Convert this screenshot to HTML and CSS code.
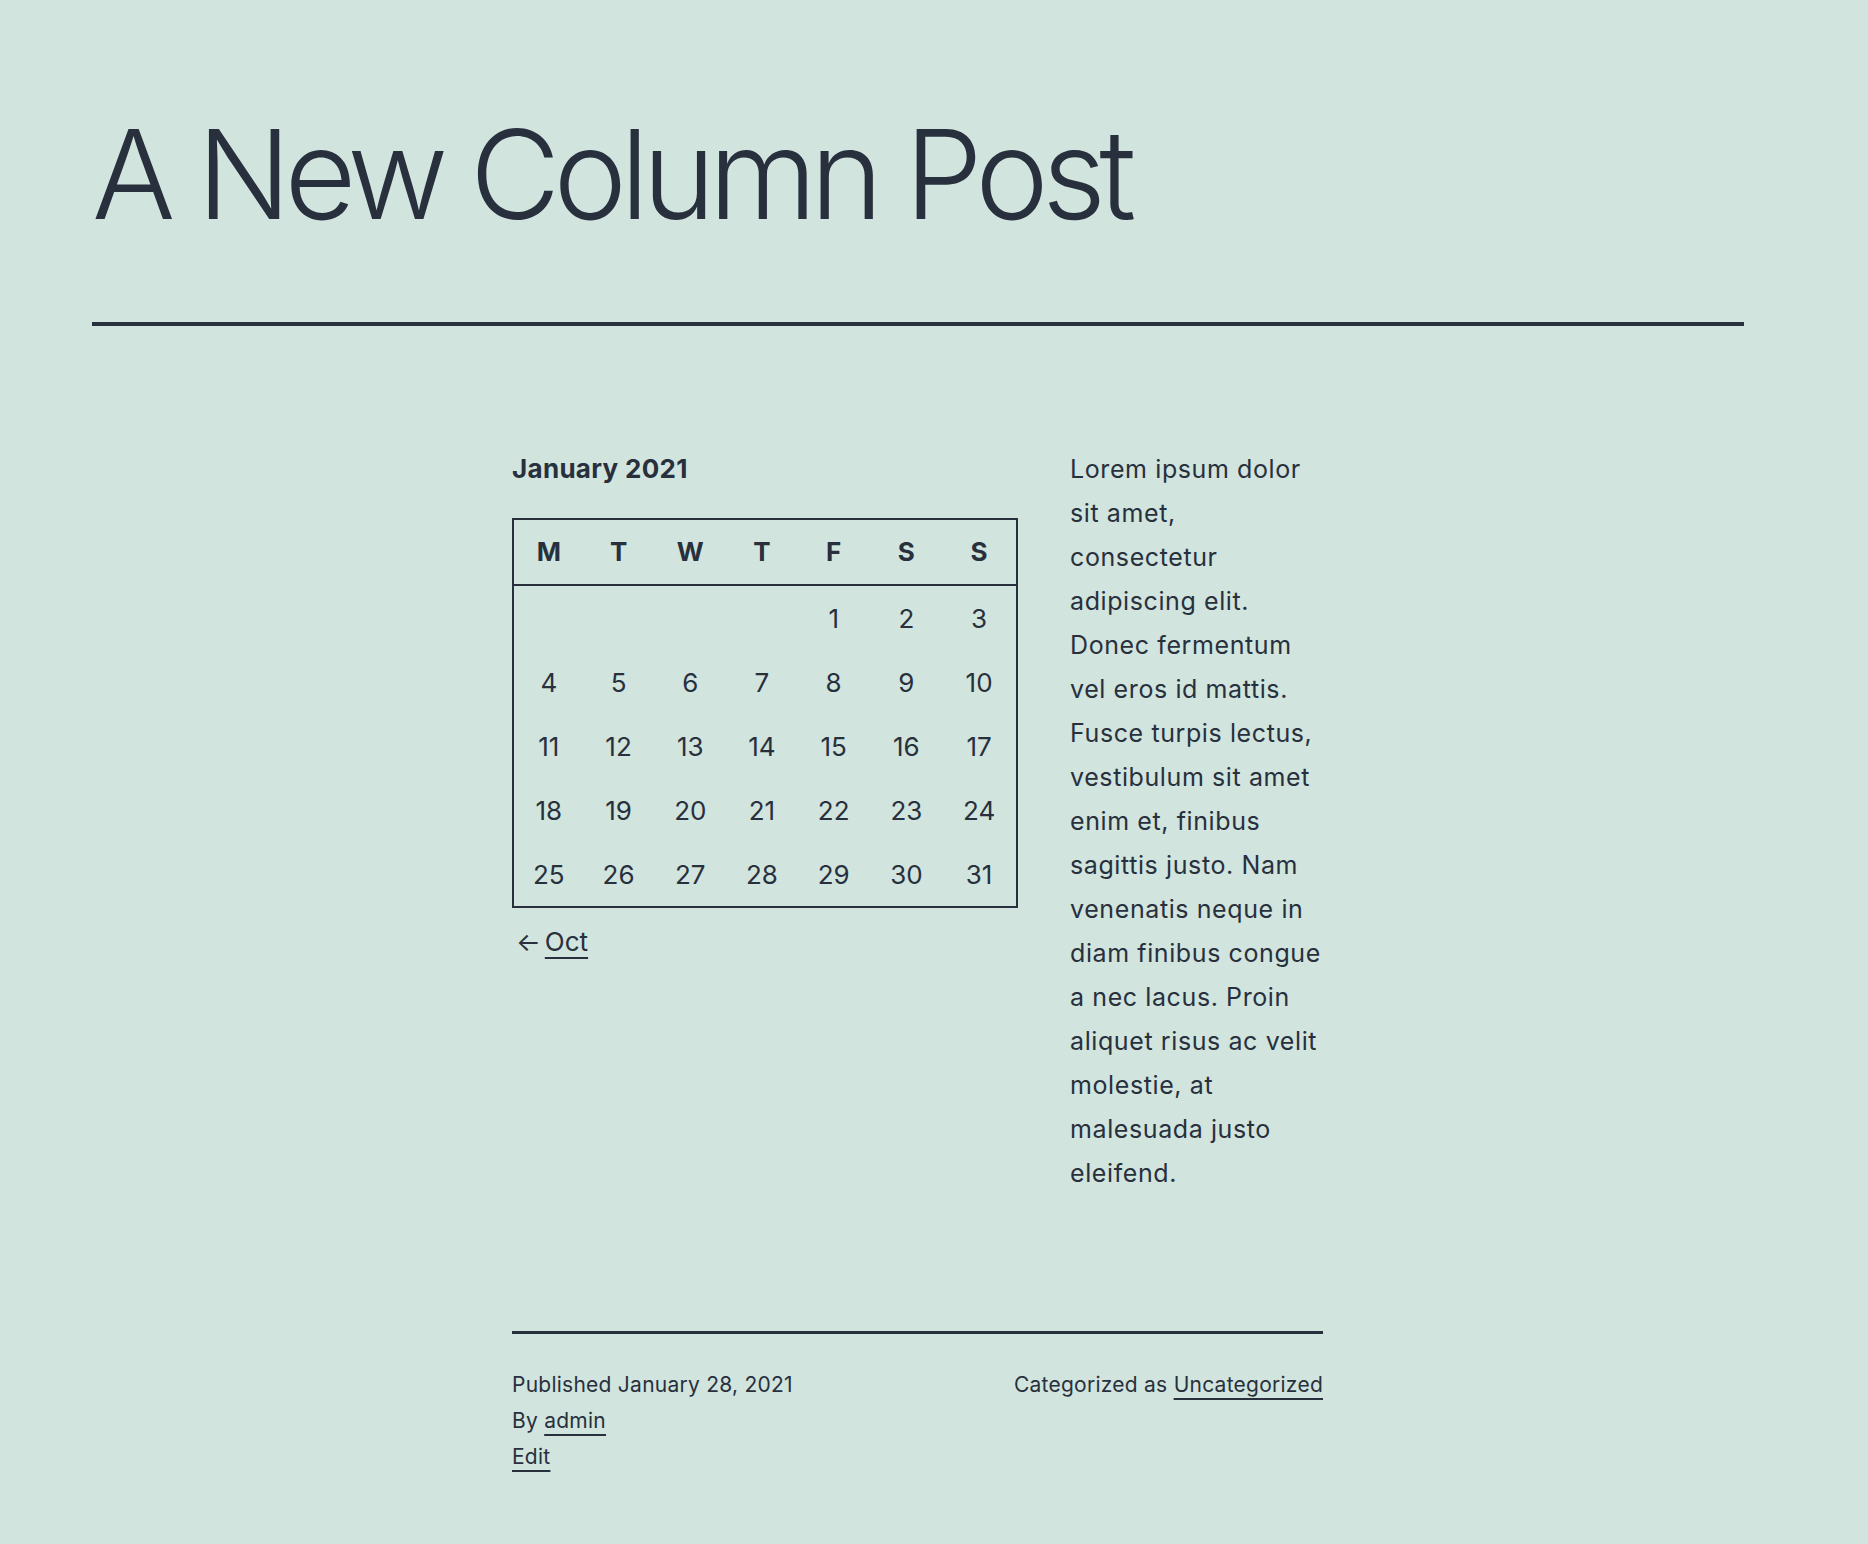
FILE: index.html
```html
<!DOCTYPE html>
<html lang="en">
<head>
<meta charset="utf-8">
<title>A New Column Post</title>
<link rel="stylesheet" href="styles.css">
</head>
<body>
<article class="post">
  <header class="entry-header">
    <h1 class="entry-title">A New Column Post</h1>
  </header>
  <div class="entry-content">
    <div class="columns">
      <div class="column column-calendar">
        <table class="calendar">
          <caption>January 2021</caption>
          <thead>
            <tr><th>M</th><th>T</th><th>W</th><th>T</th><th>F</th><th>S</th><th>S</th></tr>
          </thead>
          <tbody>
            <tr><td></td><td></td><td></td><td></td><td>1</td><td>2</td><td>3</td></tr>
            <tr><td>4</td><td>5</td><td>6</td><td>7</td><td>8</td><td>9</td><td>10</td></tr>
            <tr><td>11</td><td>12</td><td>13</td><td>14</td><td>15</td><td>16</td><td>17</td></tr>
            <tr><td>18</td><td>19</td><td>20</td><td>21</td><td>22</td><td>23</td><td>24</td></tr>
            <tr><td>25</td><td>26</td><td>27</td><td>28</td><td>29</td><td>30</td><td>31</td></tr>
          </tbody>
        </table>
        <nav class="calendar-nav"><span class="arrow">←</span><a href="#" class="link">Oct</a></nav>
      </div>
      <div class="column column-text">
        <p class="lorem">Lorem ipsum dolor<br>sit amet,<br>consectetur<br>adipiscing elit.<br>Donec fermentum<br>vel eros id mattis.<br>Fusce turpis lectus,<br>vestibulum sit amet<br>enim et, finibus<br>sagittis justo. Nam<br>venenatis neque in<br>diam finibus congue<br>a nec lacus. Proin<br>aliquet risus ac velit<br>molestie, at<br>malesuada justo<br>eleifend.</p>
      </div>
    </div>
  </div>
  <footer class="entry-footer">
    <div class="meta-left">
      <div>Published January 28, 2021</div>
      <div>By <a href="#" class="link">admin</a></div>
      <div><a href="#" class="link">Edit</a></div>
    </div>
    <div class="meta-right">Categorized as <a href="#" class="link">Uncategorized</a></div>
  </footer>
</article>
</body>
</html>
```
FILE: styles.css
```css
html, body {
  margin: 0;
  padding: 0;
}

body {
  background: #d1e4dd;
  color: #28303d;
  font-family: Inter, "Liberation Sans", sans-serif;
  font-size: 25px;
  line-height: 44px;
}

.post {
  padding-top: 106px;
  padding-bottom: 60px;
}

.entry-header {
  margin-left: 92px;
  width: 1652px;
  border-bottom: 4px solid #28303d;
  padding-bottom: 80px;
}

.entry-title {
  margin: 0;
  font-size: 124px;
  font-weight: 300;
  line-height: 1.1;
  letter-spacing: -6.7px;
}

.entry-content {
  margin-left: 512px;
  width: 811px;
  padding-top: 121px;
}

.columns {
  display: grid;
  grid-template-columns: 506px 253px;
  column-gap: 52px;
  align-items: start;
}

.calendar {
  width: 100%;
  table-layout: fixed;
  border-collapse: separate;
  border-spacing: 0;
  border: 2px solid #28303d;
  font-size: 26px;
}

.calendar caption {
  caption-side: top;
  text-align: left;
  font-weight: 700;
  font-size: 26px;
  line-height: 44px;
  letter-spacing: 0.3px;
  padding-bottom: 27px;
}

.calendar th {
  font-weight: 700;
  line-height: 64px;
  padding: 0;
  text-align: center;
  border-bottom: 2px solid #28303d;
}

.calendar td {
  line-height: 62px;
  padding: 2px 0 0;
  text-align: center;
}

.calendar th:nth-child(1), .calendar td:nth-child(1) { padding-right: 2px; }
.calendar th:nth-child(2), .calendar td:nth-child(2) { padding-right: 6px; }
.calendar th:nth-child(3), .calendar td:nth-child(3) { padding-right: 6px; }
.calendar th:nth-child(4), .calendar td:nth-child(4) { padding-right: 6px; }
.calendar th:nth-child(5), .calendar td:nth-child(5) { padding-right: 6px; }
.calendar th:nth-child(6), .calendar td:nth-child(6) { padding-right: 4px; }
.calendar th:nth-child(7), .calendar td:nth-child(7) { padding-right: 2px; }

.calendar-nav {
  margin-top: 12px;
  font-size: 26px;
  line-height: 44px;
  padding-left: 4px;
}

.calendar-nav .arrow {
  display: inline-block;
  margin-right: 4px;
}

.link {
  color: #28303d;
  text-decoration: underline;
  text-decoration-thickness: 2px;
  text-underline-offset: 6px;
}

.lorem {
  margin: 0;
  white-space: nowrap;
  letter-spacing: 0.6px;
}

.entry-footer {
  margin-left: 512px;
  width: 811px;
  margin-top: 136px;
  border-top: 3px solid #28303d;
  padding-top: 33px;
  display: flex;
  justify-content: space-between;
  align-items: flex-start;
  font-size: 21px;
  line-height: 36px;
  letter-spacing: 0.25px;
}

.meta-right {
  text-align: right;
}
```
